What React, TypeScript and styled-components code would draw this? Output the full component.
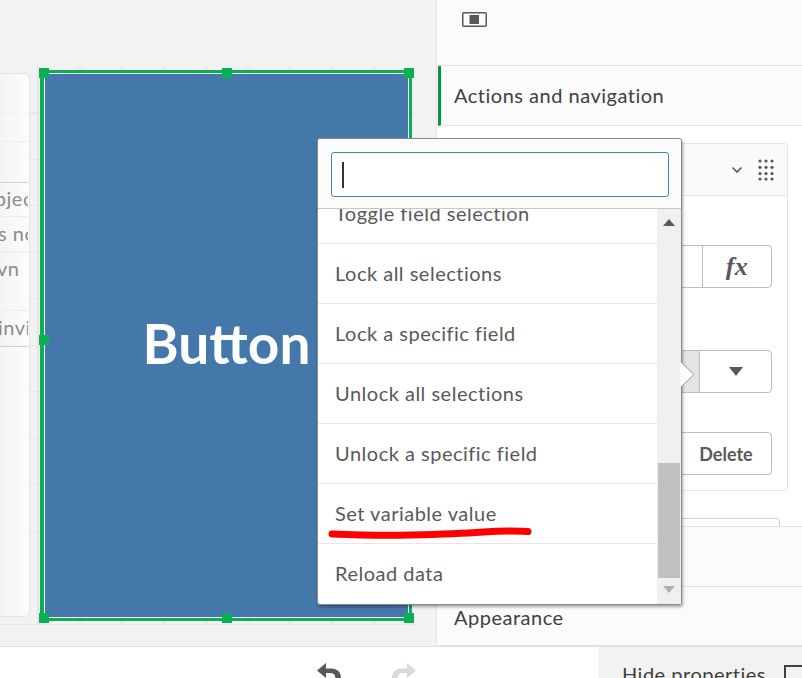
import styled, { createGlobalStyle } from "styled-components"

const GlobalStyle = createGlobalStyle`
  html, body {
    margin: 0;
    padding: 0;
    background: #fff;
  }
  * {
    box-sizing: border-box;
  }
`

const menuItems = [
  "Toggle field selection",
  "Lock all selections",
  "Lock a specific field",
  "Unlock all selections",
  "Unlock a specific field",
  "Set variable value",
  "Reload data",
]

const cardRows = [
  { height: 68, text: "", shift: 0, tone: "#ededed" },
  { height: 41, text: "", shift: 0, tone: "#d0d0d0" },
  { height: 34, text: "objec", shift: -17, tone: "#ededed" },
  { height: 35, text: "s no", shift: -2, tone: "#ededed" },
  { height: 35, text: "vn", shift: -3, tone: "transparent" },
  { height: 24, text: "", shift: 0, tone: "#ededed" },
  { height: 36, text: "invi", shift: -2, tone: "#d0d0d0" },
]

const App = () => {
  return (
    <Root>
      <GlobalStyle />
      <Main>
        <Canvas>
          <Sheet>
            <SideCard>
              {cardRows.map((row, i) => (
                <SideRow key={i} $height={row.height} $tone={row.tone}>
                  <SideText $shift={row.shift}>{row.text}</SideText>
                </SideRow>
              ))}
            </SideCard>
            <Frame>
              <ButtonFace>Button</ButtonFace>
              <Handle $x="0%" $y="0%" />
              <Handle $x="50%" $y="0%" />
              <Handle $x="100%" $y="0%" />
              <Handle $x="0%" $y="49%" />
              <Handle $x="100%" $y="49%" />
              <Handle $x="0%" $y="100%" />
              <Handle $x="50%" $y="100%" />
              <Handle $x="100%" $y="100%" />
            </Frame>
          </Sheet>
        </Canvas>
        <Panel>
          <PanelTop>
            <svg width="25" height="15" viewBox="0 0 25 15">
              <rect x="0.75" y="0.75" width="23.5" height="13.5" rx="1" fill="#fff" stroke="#595959" strokeWidth="1.5" />
              <rect x="7.5" y="3" width="9.5" height="9" fill="#595959" />
            </svg>
          </PanelTop>
          <SectionRow $active $height={60} $nudge={-1}>
            Actions and navigation
          </SectionRow>
          <PanelBody>
            <ActionCard>
              <ActionHeader>
                <svg width="14" height="10" viewBox="0 0 14 10">
                  <path d="M2.5 2.5 7 7l4.5-4.5" fill="none" stroke="#595959" strokeWidth="1.6" />
                </svg>
                <svg width="16" height="22" viewBox="0 0 16 22" fill="#595959">
                  {[2, 8, 14].flatMap((cy) =>
                    [2, 8.3, 14.6, 20].map((y) => (
                      <circle key={`${cy}-${y}`} cx={cy} cy={y} r="1.6" />
                    ))
                  )}
                </svg>
              </ActionHeader>
              <ActionContent>
                <FieldGroup $top={49}>
                  <FieldFill />
                  <FxButton>fx</FxButton>
                </FieldGroup>
                <FieldGroup $top={62}>
                  <FieldFill $grey />
                  <ArrowButton>
                    <svg width="14" height="9" viewBox="0 0 14 9">
                      <path d="M0 0h14L7 9z" fill="#595959" />
                    </svg>
                  </ArrowButton>
                </FieldGroup>
                <FieldGroup $top={39}>
                  <FieldFill $plain />
                  <DeleteButton>Delete</DeleteButton>
                </FieldGroup>
              </ActionContent>
            </ActionCard>
            <NextCard />
          </PanelBody>
          <SectionRow $height={60} />
          <SectionRow $height={59} $nudge={1}>
            Appearance
          </SectionRow>
        </Panel>
      </Main>
      <Footer>
        <UndoGroup>
          <svg width="24" height="22" viewBox="0 0 24 22">
            <path d="M9 0 0 7.5 9 15v-5h4c3.5 0 5.5 2 5.5 5.5V22H24v-7c0-6-4-9.5-9.5-9.5H9z" fill="#595959" />
          </svg>
          <svg width="24" height="22" viewBox="0 0 24 22">
            <path d="M15 0l9 7.5L15 15v-5h-4c-3.5 0-5.5 2-5.5 5.5V22H0v-7c0-6 4-9.5 9.5-9.5H15z" fill="#d9d9d9" />
          </svg>
        </UndoGroup>
        <HideProps>
          Hide properties
          <CheckBox />
        </HideProps>
      </Footer>
      <Popup>
        <PopupHeader>
          <SearchInput>
            <Caret />
          </SearchInput>
        </PopupHeader>
        <PopupBody>
          <MenuList>
            {menuItems.map((item) => (
              <MenuItem key={item}>{item}</MenuItem>
            ))}
          </MenuList>
          <ScrollTrack>
            <ScrollUp />
            <ScrollThumb />
            <ScrollDown />
          </ScrollTrack>
        </PopupBody>
        <Notch width="16" height="25" viewBox="0 0 16 25">
          <polygon points="0,1 2,1 14,12.5 2,24 0,24" fill="#fff" />
          <polyline points="2,1 14,12.5 2,24" fill="none" stroke="#9a9a9a" strokeWidth="1" />
        </Notch>
        <Scribble width="206" height="18" viewBox="0 0 206 18">
          <path
            d="M5 11C30 12 60 12.500 83 12S130 11 156 9S190 8 201 8.500"
            fill="none"
            stroke="#ff0000"
            strokeWidth="7"
            strokeLinecap="round"
          />
        </Scribble>
      </Popup>
    </Root>
  )
}

const FONT = `Lato, "Open Sans", sans-serif`

const Root = styled.div`
  position: relative;
  width: 802px;
  height: 678px;
  overflow: hidden;
  font-family: ${FONT};
  letter-spacing: 0.5px;
  display: flex;
  flex-direction: column;
`

const Main = styled.div`
  display: flex;
  height: 647px;
  border-bottom: 1px solid #e0e0e0;
`

const Canvas = styled.div`
  width: 436px;
  background: #f2f2f2;
  padding-top: 67px;
`

const Sheet = styled.div`
  display: flex;
  align-items: flex-start;
  width: 414px;
  height: 558px;
  background-image:
    repeating-linear-gradient(to bottom, transparent 0 45.5px, #e6e6e6 45.5px 46.5px),
    repeating-linear-gradient(to right, transparent 0 37px, #e6e6e6 37px 39px, transparent 39px 42px);
`

const SideCard = styled.div`
  width: 30px;
  height: 544px;
  margin-top: 6px;
  background: linear-gradient(to right, rgba(245, 245, 245, 0.7), rgba(255, 255, 255, 0.8));
  border: 1px solid #e4e4e4;
  border-left: 0;
  border-radius: 0 6px 6px 0;
  overflow: hidden;
  flex-shrink: 0;
`

const SideRow = styled.div<{ $height: number; $tone: string }>`
  height: ${(p) => p.$height}px;
  margin-right: 1px;
  padding-bottom: 3px;
  border-bottom: 1px solid ${(p) => p.$tone};
  display: flex;
  align-items: center;
  overflow: hidden;
`

const SideText = styled.span<{ $shift: number }>`
  margin-left: ${(p) => p.$shift}px;
  font-size: 20px;
  color: #8c8c8c;
  white-space: nowrap;
`

const Frame = styled.div`
  position: relative;
  width: 372px;
  height: 551px;
  margin: 3px 0 0 10px;
  padding: 1px;
  background: #fff;
  border: 3px solid #0aaf54;
  border-left-width: 4px;
  flex-shrink: 0;
`

const ButtonFace = styled.div`
  width: 100%;
  height: 100%;
  padding-bottom: 6px;
  background: #4477aa;
  border-radius: 4px;
  display: flex;
  align-items: center;
  justify-content: center;
  color: #fff;
  font-size: 55px;
  font-weight: 700;
  letter-spacing: 0;
`

const Handle = styled.span<{ $x: string; $y: string }>`
  position: absolute;
  left: ${(p) => p.$x};
  top: ${(p) => p.$y};
  width: 10px;
  height: 10px;
  transform: translate(-50%, -50%);
  background: #0aaf54;
`

const Panel = styled.div`
  width: 366px;
  border-left: 1px solid #e6e6e6;
  display: flex;
  flex-direction: column;
  background: #fff;
`

const PanelTop = styled.div`
  height: 66px;
  padding: 11px 0 0 25px;
  background: #fbfbfb;
  border-bottom: 1px solid #e4e4e4;
`

const SectionRow = styled.div<{ $active?: boolean; $height: number; $nudge?: number }>`
  height: ${(p) => p.$height}px;
  padding-left: ${(p) => (p.$active ? "13px" : "17px")};
  margin-left: ${(p) => (p.$active ? "1px" : "0")};
  border-left: ${(p) => (p.$active ? "3px solid #009845" : "0")};
  border-bottom: 1px solid #e4e4e4;
  background: #fbfbfb;
  display: flex;
  align-items: center;
  font-size: 20px;
  color: #404040;
  flex-shrink: 0;
  padding-top: ${(p) => ((p.$nudge ?? 0) > 0 ? "2px" : "0")};
  padding-bottom: ${(p) => ((p.$nudge ?? 0) < 0 ? "2px" : "0")};
`

const PanelBody = styled.div`
  height: 401px;
  padding: 17px 14px 0 15px;
  overflow: hidden;
  flex-shrink: 0;
  border-bottom: 1px solid #e4e4e4;
`

const ActionCard = styled.div`
  height: 348px;
  border: 1px solid #e4e4e4;
  border-radius: 4px;
`

const ActionHeader = styled.div`
  height: 52px;
  padding-right: 13px;
  background: #fafafa;
  border-bottom: 1px solid #e4e4e4;
  display: flex;
  align-items: center;
  justify-content: flex-end;
  gap: 14px;
`

const ActionContent = styled.div`
  padding: 0 15px 0 16px;
  display: flex;
  flex-direction: column;
`

const FieldGroup = styled.div<{ $top: number }>`
  margin-top: ${(p) => p.$top}px;
  height: 43px;
  display: flex;
  border: 1px solid #bdbdbd;
  border-radius: 4px;
  overflow: hidden;
`

const FieldFill = styled.div<{ $grey?: boolean; $plain?: boolean }>`
  flex: 1;
  background: ${(p) =>
    p.$grey ? "linear-gradient(to right, #fff 0 calc(100% - 18px), #e4e4e4 calc(100% - 18px))" : "#fff"};
  border-right: ${(p) => (p.$plain ? "0" : "1px solid #bdbdbd")};
`

const FxButton = styled.div`
  width: 68px;
  display: flex;
  align-items: center;
  justify-content: center;
  font-family: "Liberation Serif", serif;
  font-style: italic;
  font-weight: 700;
  font-size: 26px;
  color: #595959;
`

const ArrowButton = styled.div`
  width: 71px;
  display: flex;
  align-items: center;
  justify-content: center;
`

const DeleteButton = styled.div`
  width: 90px;
  display: flex;
  align-items: center;
  justify-content: center;
  font-size: 18px;
  font-weight: 700;
  letter-spacing: 0;
  color: #595959;
`

const NextCard = styled.div`
  height: 40px;
  margin: 27px 8px 0 0;
  border: 1px solid #d0d0d0;
  border-radius: 4px;
`

const Footer = styled.div`
  flex: 1;
  display: flex;
  justify-content: flex-end;
  background: #fff;
  overflow: hidden;
`

const UndoGroup = styled.div`
  display: flex;
  gap: 51px;
  padding-top: 16px;
  margin-right: 182px;
`

const HideProps = styled.div`
  width: 204px;
  background: #f2f2f2;
  padding: 15px 0 0 24px;
  display: flex;
  gap: 18px;
  font-size: 20px;
  color: #404040;
  white-space: nowrap;
`

const CheckBox = styled.span`
  width: 20px;
  height: 20px;
  margin-top: 3px;
  flex-shrink: 0;
  border: 2px solid #404040;
`

const Popup = styled.div`
  position: absolute;
  left: 317px;
  top: 138px;
  width: 365px;
  height: 467px;
  display: flex;
  flex-direction: column;
  background: #fff;
  border: 1px solid #8a8a8a;
  border-radius: 3px;
  box-shadow: 1px 2px 3px rgba(0, 0, 0, 0.35);
`

const PopupHeader = styled.div`
  height: 70px;
  padding: 13px 12px 0 13px;
  background: #fbfbfb;
  border-bottom: 1px solid #c8c8c8;
  border-radius: 3px 3px 0 0;
  flex-shrink: 0;
`

const SearchInput = styled.div`
  height: 45px;
  background: #fff;
  border: 1px solid #3f8ab3;
  border-radius: 3px;
  padding: 9px 0 0 10px;
`

const Caret = styled.div`
  width: 2px;
  height: 26px;
  background: #333;
`

const PopupBody = styled.div`
  flex: 1;
  min-height: 0;
  display: flex;
`

const MenuList = styled.div`
  flex: 1;
  display: flex;
  flex-direction: column;
  justify-content: flex-end;
  overflow: hidden;
`

const MenuItem = styled.div`
  height: 60px;
  flex-shrink: 0;
  padding: 0 0 2px 17px;
  border-bottom: 1px solid #e6e6e6;
  display: flex;
  align-items: center;
  font-size: 20px;
  color: #595959;

  &:last-child {
    border-bottom: 0;
  }
`

const ScrollTrack = styled.div`
  width: 24px;
  background: #f0f0f0;
  display: flex;
  flex-direction: column;
  align-items: center;
  padding: 10px 1px 0;
`

const ScrollUp = styled.div`
  width: 0;
  height: 0;
  border-left: 6px solid transparent;
  border-right: 6px solid transparent;
  border-bottom: 7px solid #595959;
`

const ScrollThumb = styled.div`
  width: 22px;
  height: 115px;
  margin-top: 237px;
  background: #c0c0c0;
`

const ScrollDown = styled.div`
  width: 0;
  height: 0;
  margin-top: 8px;
  border-left: 6px solid transparent;
  border-right: 6px solid transparent;
  border-top: 7px solid #b0b0b0;
`

const Notch = styled.svg`
  position: absolute;
  left: 362px;
  top: 223px;
`

const Scribble = styled.svg`
  position: absolute;
  left: 9px;
  top: 384px;
`

export default App
